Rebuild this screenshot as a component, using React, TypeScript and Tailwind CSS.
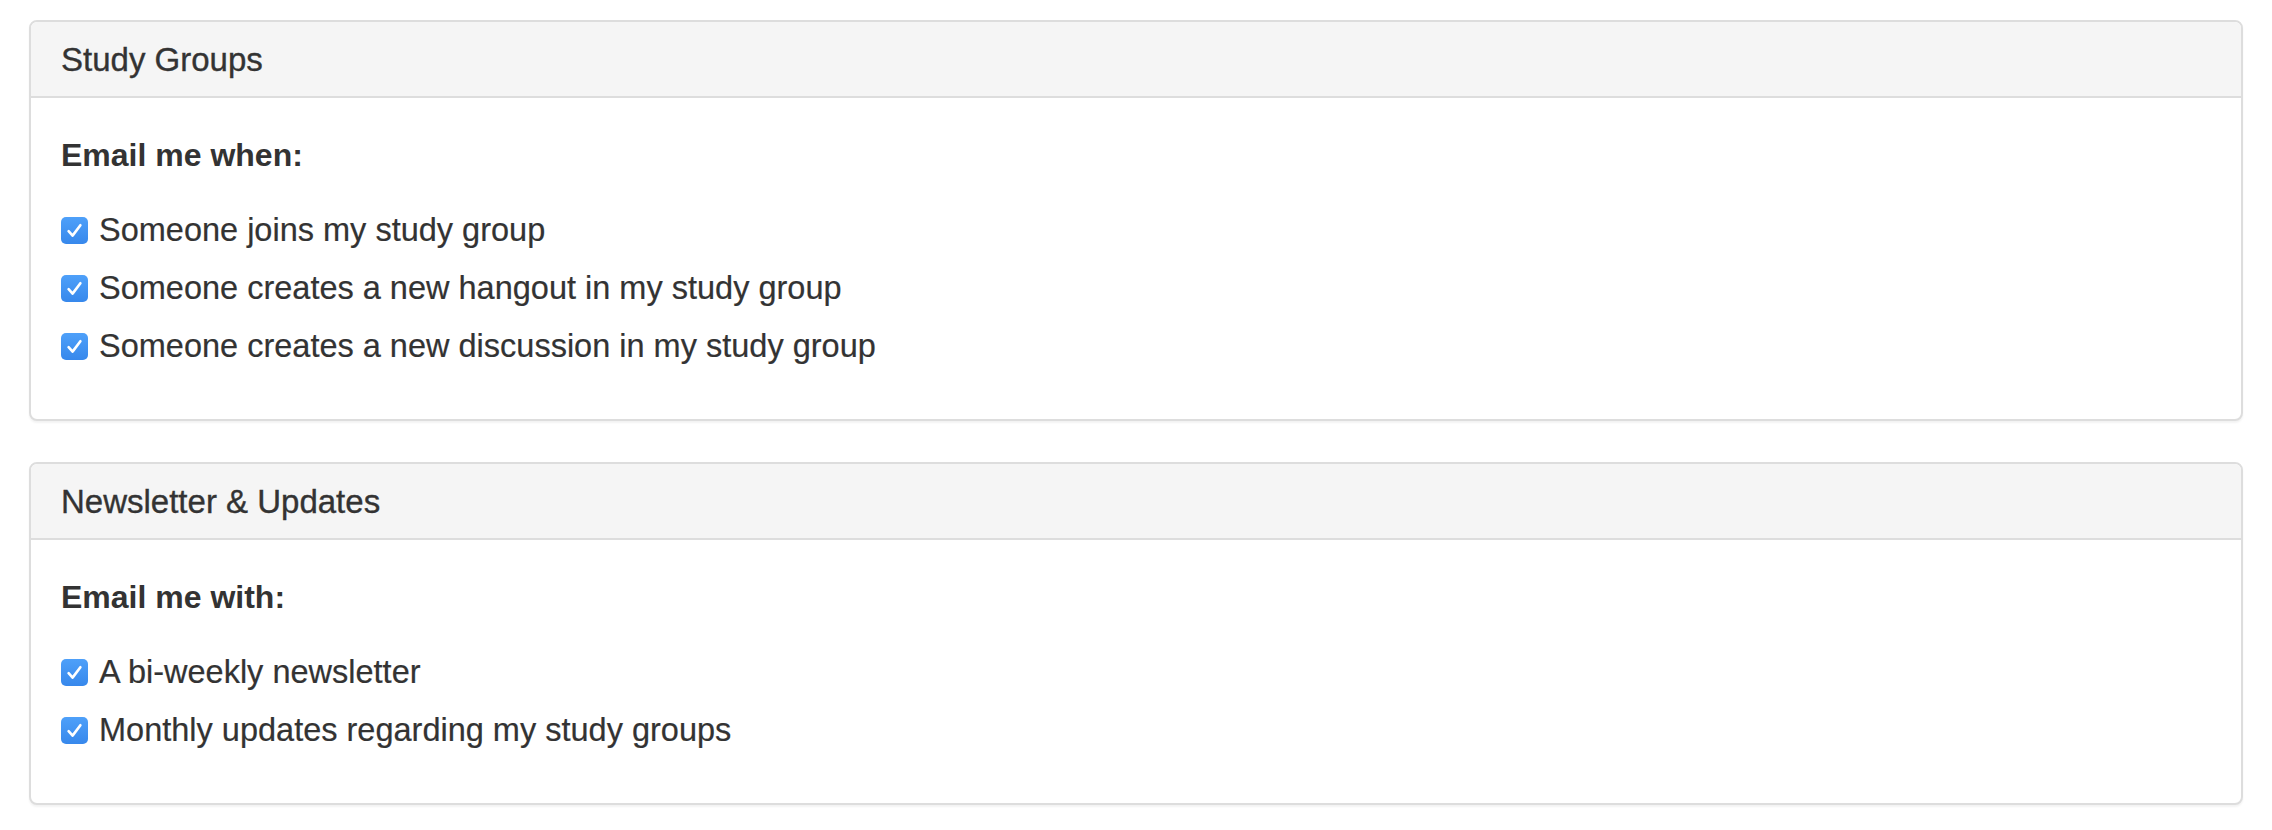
import React from "react";

type Section = {
  title: string;
  lead: string;
  items: string[];
};

const sections: Section[] = [
  {
    title: "Study Groups",
    lead: "Email me when:",
    items: [
      "Someone joins my study group",
      "Someone creates a new hangout in my study group",
      "Someone creates a new discussion in my study group",
    ],
  },
  {
    title: "Newsletter & Updates",
    lead: "Email me with:",
    items: [
      "A bi-weekly newsletter",
      "Monthly updates regarding my study groups",
    ],
  },
];

function CheckBox() {
  return (
    <span className="flex h-[27px] w-[27px] shrink-0 items-center justify-center rounded-[5px] bg-gradient-to-b from-[#4ea0f9] to-[#3788ec]">
      <svg width="27" height="27" viewBox="0 0 27 27" fill="none">
        <path
          d="M7.6 14.2 L11.6 18.6 L19.4 8.2"
          stroke="white"
          strokeWidth="2.6"
          strokeLinecap="round"
          strokeLinejoin="round"
        />
      </svg>
    </span>
  );
}

function Panel({ section }: { section: Section }) {
  return (
    <div className="rounded-[8px] border-2 border-[#dddddd] bg-white shadow-[0_2px_2px_rgba(0,0,0,0.05)]">
      <div className="rounded-t-[6px] border-b-2 border-[#dddddd] bg-[#f5f5f5] px-[30px] pt-[21px] pb-[19px] text-[33px] leading-[34px] text-[#333333] [-webkit-text-stroke:0.35px_#333333]">
        {section.title}
      </div>
      <div className="px-[30px] pt-[30px] pb-[44px]">
        <div className="mt-[4px] text-[32px] font-bold leading-[46px] text-[#333333]">
          {section.lead}
        </div>
        <div className="mt-[23px]">
          {section.items.map((item) => (
            <label
              key={item}
              className="flex h-[58px] cursor-pointer items-center gap-[11px] text-[32.5px] text-[#333333]"
            >
              <CheckBox />
              <span className="leading-[58px] [-webkit-text-stroke:0.2px_#333333]">{item}</span>
            </label>
          ))}
        </div>
      </div>
    </div>
  );
}

export default function App() {
  return (
    <div
      className="min-h-[830px] bg-white px-[29px] pt-[20px]"
      style={{ fontFamily: '"Liberation Sans", Arial, sans-serif' }}
    >
      <div className="flex flex-col gap-[41px]">
        {sections.map((s) => (
          <Panel key={s.title} section={s} />
        ))}
      </div>
    </div>
  );
}
